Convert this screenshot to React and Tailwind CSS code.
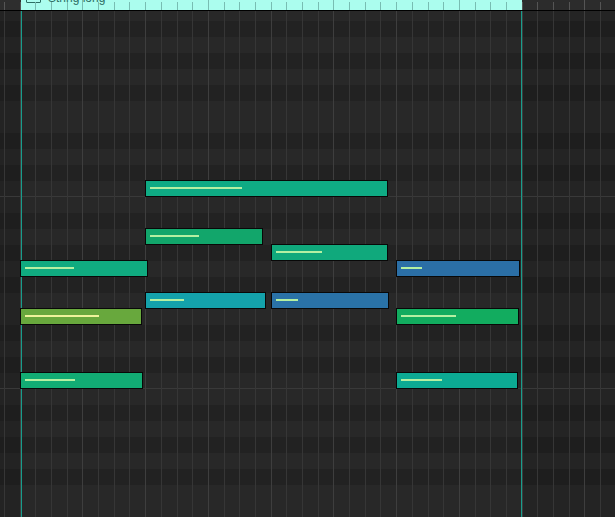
import React from 'react';

// piano roll: rows top-down starting at B, light = white key, dark = black key
const octave = ['L', 'D', 'L', 'D', 'L', 'D', 'L', 'L', 'D', 'L', 'D', 'L'];
const rows = Array.from({ length: 32 }, (_, i) => ({
  type: octave[i % 12],
  isC: i % 12 === 11,
  height: i === 0 ? 10 : 16,
}));

const gridX = (k) => Math.round(19.6 + 15.69 * k);
const ticks = Array.from({ length: 39 }, (_, i) => i - 1);

const notes = [
  { x: 145, y: 180, w: 243, vel: 92, color: '#0fab84' },
  { x: 145, y: 228, w: 118, vel: 49, color: '#12a66b' },
  { x: 271, y: 244, w: 117, vel: 46, color: '#10a97c' },
  { x: 20, y: 260, w: 128, vel: 49, color: '#10ab80' },
  { x: 396, y: 260, w: 124, vel: 21, color: '#2b6fa6' },
  { x: 145, y: 292, w: 121, vel: 34, color: '#14a2ab' },
  { x: 271, y: 292, w: 118, vel: 22, color: '#2a72a7' },
  { x: 20, y: 308, w: 122, vel: 74, color: '#68a83d', line: '#eef39a' },
  { x: 396, y: 308, w: 123, vel: 55, color: '#12ac5f' },
  { x: 20, y: 372, w: 123, vel: 50, color: '#12ac74' },
  { x: 396, y: 372, w: 122, vel: 41, color: '#0caa93' },
];

const Header = () => (
  <div className="relative flex h-[11px] border-b border-black">
    <div className="w-[21px] bg-[#2e2e2e]" />
    <div className="relative w-[501px] overflow-hidden bg-[#abfdee]">
      <div className="absolute left-[5px] top-[-7px] h-[10px] w-[15px] rounded-[1px] border border-[#2d6f64]" />
      <span
        className="absolute left-[27px] top-[-8px] text-[12px] leading-[12px] text-[#2d6f64]"
        style={{ fontFamily: '"Liberation Sans", Arial, sans-serif' }}
      >
        String long
      </span>
    </div>
    <div className="flex-1 bg-[#2c2c2c]" />
    {ticks.map((k) => {
      const x = gridX(k);
      const inLoop = x > 21 && x < 521;
      return (
        <div
          key={k}
          className={`absolute bottom-0 w-px ${k % 8 === 4 || k % 8 === -4 ? 'top-0' : 'top-[2px]'} ${inLoop ? 'bg-[#78bdb2]' : 'bg-[#555555]'}`}
          style={{ left: x }}
        />
      );
    })}
  </div>
);

const Row = ({ row }) => (
  <div
    className={`flex ${row.isC ? 'border-b border-[#393939]' : ''}`}
    style={{ height: row.height }}
  >
    <div className={`w-[21px] ${row.type === 'L' ? 'bg-[#232323]' : 'bg-[#1e1e1e]'}`} />
    <div className={`w-[501px] ${row.type === 'L' ? 'bg-[#282828]' : 'bg-[#222222]'}`} />
    <div className={`flex-1 ${row.type === 'L' ? 'bg-[#242424]' : 'bg-[#1e1e1e]'}`} />
  </div>
);

const Note = ({ note }) => (
  <div
    className="absolute h-[17px] border border-[#080808]"
    style={{ left: note.x, top: note.y, width: note.w, backgroundColor: note.color }}
  >
    <div
      className="absolute left-[4px] top-[6px] h-[2px]"
      style={{ width: note.vel, backgroundColor: note.line || '#b4f0a2' }}
    />
  </div>
);

const App = () => {
  return (
    <div className="relative h-[517px] w-[615px] overflow-hidden bg-[#1e1e1e]">
      <Header />

      {/* key rows */}
      <div className="flex flex-col">
        {rows.map((row, i) => (
          <Row key={i} row={row} />
        ))}
      </div>

      {/* vertical grid lines */}
      {ticks.map((k) => (
        <div
          key={k}
          className={`absolute bottom-0 top-[11px] w-px ${k % 4 === 0 ? 'bg-[#3e3e3e]' : 'bg-[#363636]'}`}
          style={{ left: gridX(k) }}
        />
      ))}

      {/* loop markers */}
      <div className="absolute bottom-0 top-[11px] left-[21px] w-px bg-[#179d8c]" />
      <div className="absolute bottom-0 top-[11px] left-[521px] w-px bg-[#179d8c]" />

      {notes.map((note, i) => (
        <Note key={i} note={note} />
      ))}
    </div>
  );
};

export default App;
